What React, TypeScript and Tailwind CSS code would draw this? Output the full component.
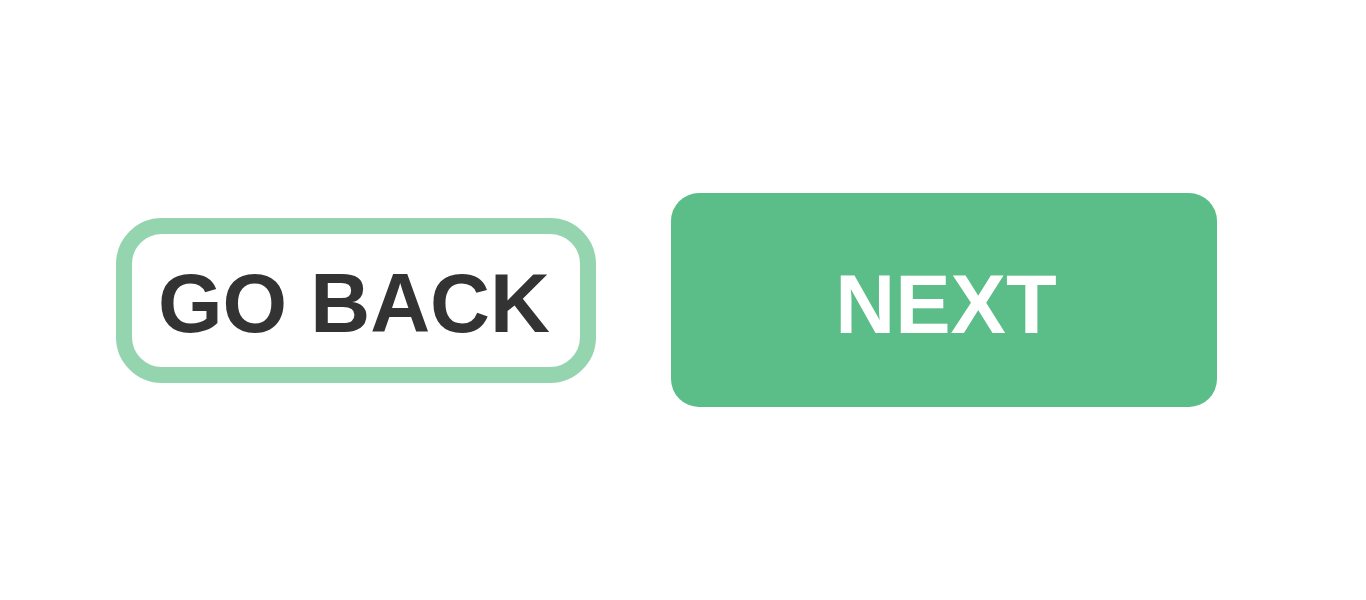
// Two wizard navigation buttons, side by side.
export default function App() {
  return (
    <div
      className="flex h-[600px] w-full items-center gap-[75px] bg-white pl-[116px]"
      style={{ fontFamily: '"Liberation Sans", Arial, sans-serif' }}
    >
      <button className="flex h-[165px] w-[480px] items-center justify-center rounded-[46px] border-[16px] border-[#94d4ae] bg-white pr-[4px] pt-[7px] text-[83px] font-bold leading-none text-[#333333]">
        GO BACK
      </button>
      <button className="flex h-[214px] w-[546px] items-center justify-center rounded-[28px] bg-[#5bbd87] pl-[4px] pt-[8px] text-[83px] font-bold leading-none text-white">
        NEXT
      </button>
    </div>
  );
}
